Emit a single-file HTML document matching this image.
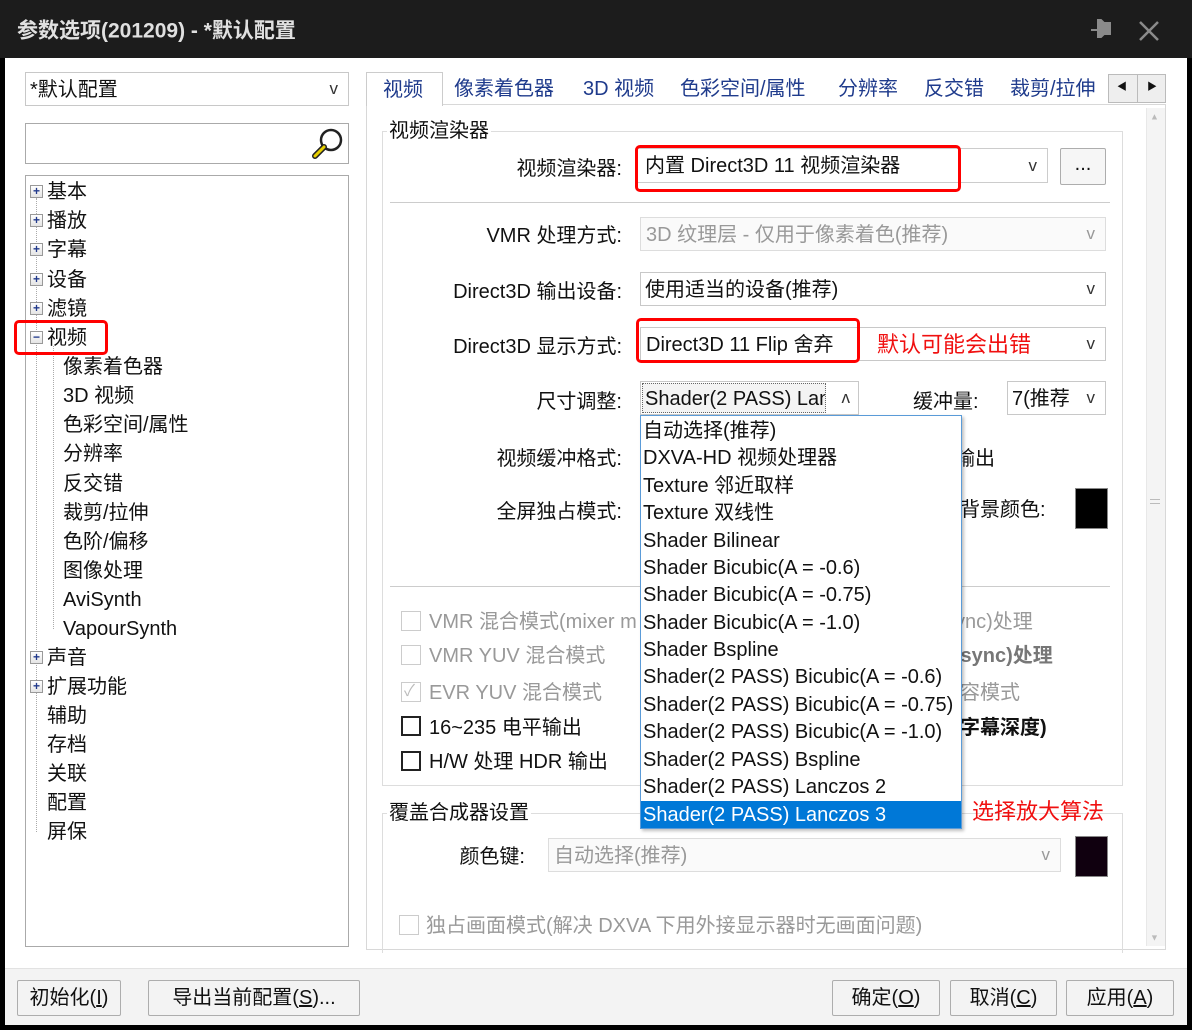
<!DOCTYPE html>
<html><head><meta charset="utf-8">
<style>
*{margin:0;padding:0;box-sizing:border-box}
body{width:1192px;height:1030px;background:#000;position:relative;overflow:hidden;font-family:"Liberation Sans","Noto Sans CJK SC",sans-serif;font-size:20px;color:#111}
.a{position:absolute}
.t{position:absolute;white-space:nowrap;line-height:1;transform:translateY(-50%)}
.r{text-align:right}
.cb{position:absolute;background:#fff;border:1px solid #c8c8c8}
.cb.g{background:#fafafa;border-color:#ddd}
.v{position:absolute;right:10px;top:50%;transform:translateY(-50%);font-size:17px;color:#333}
.btn{position:absolute;background:#f3f3f3;border:1px solid #adadad;border-radius:2px;text-align:center;line-height:34px}
.red{position:absolute;border:3px solid #f00;border-radius:5px}
.chk{position:absolute;width:20px;height:20px;border:1px solid #ccc;background:#fff}
.chk.b{border:2px solid #222}
.grey{color:#999}
.tab{color:#1f3b8c}
.pb{position:absolute;width:13px;height:13px;border:1px solid #999;background:linear-gradient(#fff,#e4e4e4);font-size:12px;line-height:10px;text-align:center;color:#223a8c;font-weight:bold}
.dl{position:absolute;border-left:1px dotted #aaa}
.dh{position:absolute;border-top:1px dotted #aaa;width:8px}
</style></head><body>
<!-- title bar -->
<div class="a" style="left:0;top:0;width:1192px;height:58px;background:#1c1c1c"></div>
<div class="t" style="left:17px;top:31px;font-size:21px;color:#e0e0e0;font-weight:bold">参数选项(201209) - *默认配置</div>
<svg class="a" style="left:1088px;top:19px" width="26" height="22"><path d="M3 11h7M10 5v13h3l3-3h6V4h-6l-3-3h-3z" fill="#8a8a8a" stroke="#8a8a8a" stroke-width="2"/></svg>
<svg class="a" style="left:1138px;top:20px" width="22" height="22"><path d="M2 2L20 20M20 2L2 20" stroke="#8a8a8a" stroke-width="2.5"/></svg>
<!-- window body -->
<div class="a" style="left:5px;top:58px;width:1182px;height:967px;background:#fff"></div>
<div class="a" style="left:5px;top:968px;width:1182px;height:57px;background:#f3f3f3;border-top:1px solid #e2e2e2"></div>

<!-- profile combo -->
<div class="cb" style="left:25px;top:72px;width:324px;height:34px"><div class="t" style="left:4px;top:17px">*默认配置</div><span class="v">v</span></div>
<!-- search -->
<div class="cb" style="left:25px;top:123px;width:324px;height:41px;border-color:#aaa"></div>
<svg class="a" style="left:309px;top:126px" width="36" height="36"><circle cx="22" cy="14" r="10" fill="#fff" stroke="#222" stroke-width="2.5"/><path d="M15 21L6 30" stroke="#222" stroke-width="6" stroke-linecap="round"/><path d="M15 21L6 30" stroke="#e8d000" stroke-width="3" stroke-linecap="round"/></svg>
<!-- tree -->
<div class="cb" style="left:25px;top:175px;width:324px;height:772px;border-color:#aaa"></div>
<div class="dl" style="left:36px;top:198px;height:634px"></div>
<div class="dl" style="left:53px;top:346px;height:283px"></div>
<div class="pb" style="left:30px;top:185px">+</div><div class="t" style="left:47px;top:192px">基本</div>
<div class="pb" style="left:30px;top:214px">+</div><div class="t" style="left:47px;top:221px">播放</div>
<div class="pb" style="left:30px;top:243px">+</div><div class="t" style="left:47px;top:250px">字幕</div>
<div class="pb" style="left:30px;top:273px">+</div><div class="t" style="left:47px;top:280px">设备</div>
<div class="pb" style="left:30px;top:302px">+</div><div class="t" style="left:47px;top:309px">滤镜</div>
<div class="pb" style="left:30px;top:331px">−</div><div class="t" style="left:47px;top:338px">视频</div>
<div class="t" style="left:63px;top:367px">像素着色器</div>
<div class="t" style="left:63px;top:396px">3D 视频</div>
<div class="t" style="left:63px;top:425px">色彩空间/属性</div>
<div class="t" style="left:63px;top:454px">分辨率</div>
<div class="t" style="left:63px;top:484px">反交错</div>
<div class="t" style="left:63px;top:513px">裁剪/拉伸</div>
<div class="t" style="left:63px;top:542px">色阶/偏移</div>
<div class="t" style="left:63px;top:571px">图像处理</div>
<div class="t" style="left:63px;top:600px">AviSynth</div>
<div class="t" style="left:63px;top:629px">VapourSynth</div>
<div class="pb" style="left:30px;top:651px">+</div><div class="t" style="left:47px;top:658px">声音</div>
<div class="pb" style="left:30px;top:680px">+</div><div class="t" style="left:47px;top:687px">扩展功能</div>
<div class="t" style="left:47px;top:716px">辅助</div>
<div class="t" style="left:47px;top:745px">存档</div>
<div class="t" style="left:47px;top:774px">关联</div>
<div class="t" style="left:47px;top:803px">配置</div>
<div class="t" style="left:47px;top:832px">屏保</div>
<div class="red" style="left:14px;top:320px;width:94px;height:35px"></div>

<!-- tabs -->
<div class="a" style="left:366px;top:104px;width:800px;height:846px;border:1px solid #d8d8d8;background:#fff"></div>
<div class="a" style="left:366px;top:72px;width:77px;height:34px;border:1px solid #ccc;border-bottom:none;background:#fff"></div>
<div class="t tab" style="left:383px;top:90px">视频</div>
<div class="t tab" style="left:454px;top:89px">像素着色器</div>
<div class="t tab" style="left:583px;top:89px">3D 视频</div>
<div class="t tab" style="left:680px;top:89px">色彩空间/属性</div>
<div class="t tab" style="left:838px;top:89px">分辨率</div>
<div class="t tab" style="left:924px;top:89px">反交错</div>
<div class="t tab" style="left:1010px;top:89px">裁剪/拉伸</div>
<div class="a" style="left:1108px;top:74px;width:58px;height:29px;border:1px solid #bbb;background:#eee"></div>
<div class="a" style="left:1137px;top:74px;width:1px;height:29px;background:#bbb"></div>
<div class="t" style="left:1117px;top:88px;font-size:10px">◀</div>
<div class="t" style="left:1147px;top:88px;font-size:10px">▶</div>
<!-- scrollbar -->
<div class="a" style="left:1146px;top:108px;width:19px;height:838px;background:#f4f4f4;border-left:1px solid #e8e8e8"></div>
<div class="t" style="left:1150px;top:117px;font-size:9px;color:#bbb">▲</div>
<div class="t" style="left:1150px;top:938px;font-size:9px;color:#bbb">▼</div>
<div class="a" style="left:1150px;top:499px;width:10px;height:5px;border-top:1px solid #bbb;border-bottom:1px solid #bbb"></div>

<!-- group 1 -->
<div class="a" style="left:382px;top:131px;width:741px;height:655px;border:1px solid #ddd"></div>
<div class="t" style="left:387px;top:131px;background:#fff;padding:0 2px">视频渲染器</div>
<div class="a" style="left:390px;top:202px;width:720px;height:1px;background:#ccc"></div>
<div class="a" style="left:390px;top:586px;width:720px;height:1px;background:#ccc"></div>

<div class="t r" style="right:570px;top:169px">视频渲染器:</div>
<div class="cb" style="left:636px;top:148px;width:412px;height:35px;border-color:#ccc"><div class="t" style="left:8px;top:17px">内置 Direct3D 11 视频渲染器</div><span class="v">v</span></div>
<div class="btn" style="left:1060px;top:148px;width:46px;height:37px;background:#f6f6f6;line-height:30px">...</div>
<div class="red" style="left:635px;top:145px;width:326px;height:47px"></div>

<div class="t r" style="right:570px;top:236px">VMR 处理方式:</div>
<div class="cb g" style="left:640px;top:217px;width:466px;height:34px"><div class="t grey" style="left:5px;top:17px">3D 纹理层 - 仅用于像素着色(推荐)</div><span class="v grey">v</span></div>

<div class="t r" style="right:570px;top:292px">Direct3D 输出设备:</div>
<div class="cb" style="left:640px;top:272px;width:466px;height:34px"><div class="t" style="left:4px;top:17px">使用适当的设备(推荐)</div><span class="v">v</span></div>

<div class="t r" style="right:570px;top:347px">Direct3D 显示方式:</div>
<div class="cb" style="left:640px;top:327px;width:466px;height:34px"><div class="t" style="left:5px;top:17px">Direct3D 11 Flip 舍弃</div><span class="v">v</span></div>
<div class="red" style="left:636px;top:318px;width:224px;height:45px"></div>
<div class="t" style="left:877px;top:345px;color:#f01010;font-size:22px">默认可能会出错</div>

<div class="t r" style="right:570px;top:402px">尺寸调整:</div>
<div class="cb" style="left:640px;top:381px;width:219px;height:34px;overflow:hidden"><div class="a" style="left:1px;top:1px;width:184px;height:30px;border:1px dotted #666;background:#f4f4f4"></div><div class="t" style="left:4px;top:17px;width:180px;overflow:hidden">Shader(2 PASS) Lanczos 3</div><span class="v" style="right:8px">ʌ</span></div>
<div class="t" style="left:913px;top:402px">缓冲量:</div>
<div class="cb" style="left:1007px;top:381px;width:99px;height:34px"><div class="t" style="left:4px;top:17px">7(推荐</div><span class="v">v</span></div>

<div class="t r" style="right:570px;top:459px">视频缓冲格式:</div>
<div class="t" style="left:955px;top:459px">输出</div>
<div class="t r" style="right:570px;top:512px">全屏独占模式:</div>
<div class="t" style="left:960px;top:510px">背景颜色:</div>
<div class="a" style="left:1075px;top:488px;width:33px;height:41px;background:#000;border:1px solid #888"></div>

<!-- checkboxes -->
<div class="chk" style="left:401px;top:611px"></div><div class="t grey" style="left:429px;top:622px">VMR 混合模式(mixer m</div>
<div class="t grey" style="left:955px;top:622px">ync)处理</div>
<div class="chk" style="left:401px;top:645px"></div><div class="t grey" style="left:429px;top:656px">VMR YUV 混合模式</div>
<div class="t" style="left:955px;top:656px;color:#777;font-weight:bold">/sync)处理</div>
<div class="chk" style="left:401px;top:682px"></div><div class="t" style="left:404px;top:692px;color:#bbb;font-size:16px">✓</div><div class="t grey" style="left:429px;top:693px">EVR YUV 混合模式</div>
<div class="t grey" style="left:960px;top:693px">容模式</div>
<div class="chk b" style="left:401px;top:716px"></div><div class="t" style="left:429px;top:728px">16~235 电平输出</div>
<div class="t" style="left:960px;top:728px;font-weight:bold">字幕深度)</div>
<div class="chk b" style="left:401px;top:751px"></div><div class="t" style="left:429px;top:762px">H/W 处理 HDR 输出</div>

<!-- group 2 -->
<div class="a" style="left:382px;top:813px;width:741px;height:140px;border:1px solid #ddd;border-bottom:none"></div>
<div class="t" style="left:387px;top:813px;background:#fff;padding:0 2px">覆盖合成器设置</div>
<div class="t r" style="right:667px;top:857px">颜色键:</div>
<div class="cb g" style="left:548px;top:838px;width:513px;height:34px"><div class="t grey" style="left:5px;top:17px">自动选择(推荐)</div><span class="v grey">v</span></div>
<div class="a" style="left:1075px;top:836px;width:33px;height:41px;background:#10000f;border:1px solid #888"></div>
<div class="chk" style="left:399px;top:915px"></div><div class="t grey" style="left:426px;top:926px">独占画面模式(解决 DXVA 下用外接显示器时无画面问题)</div>

<!-- dropdown list -->
<div class="a" style="left:640px;top:415px;width:322px;height:414px;background:#fff;border:1px solid #5a9bd8;box-shadow:2px 2px 3px rgba(0,0,0,.25)"></div>
<div class="a" style="left:641px;top:801px;width:320px;height:27px;background:#0078d7"></div>
<div class="t" style="left:643px;top:431px">自动选择(推荐)</div>
<div class="t" style="left:643px;top:458px">DXVA-HD 视频处理器</div>
<div class="t" style="left:643px;top:486px">Texture 邻近取样</div>
<div class="t" style="left:643px;top:513px">Texture 双线性</div>
<div class="t" style="left:643px;top:541px">Shader Bilinear</div>
<div class="t" style="left:643px;top:568px">Shader Bicubic(A = -0.6)</div>
<div class="t" style="left:643px;top:595px">Shader Bicubic(A = -0.75)</div>
<div class="t" style="left:643px;top:623px">Shader Bicubic(A = -1.0)</div>
<div class="t" style="left:643px;top:650px">Shader Bspline</div>
<div class="t" style="left:643px;top:677px">Shader(2 PASS) Bicubic(A = -0.6)</div>
<div class="t" style="left:643px;top:705px">Shader(2 PASS) Bicubic(A = -0.75)</div>
<div class="t" style="left:643px;top:732px">Shader(2 PASS) Bicubic(A = -1.0)</div>
<div class="t" style="left:643px;top:760px">Shader(2 PASS) Bspline</div>
<div class="t" style="left:643px;top:787px">Shader(2 PASS) Lanczos 2</div>
<div class="t" style="left:643px;top:815px;color:#fff">Shader(2 PASS) Lanczos 3</div>
<div class="t" style="left:972px;top:812px;color:#f01010;font-size:22px">选择放大算法</div>

<!-- bottom buttons -->
<div class="btn" style="left:17px;top:980px;width:104px;height:36px">初始化(<u>I</u>)</div>
<div class="btn" style="left:148px;top:980px;width:212px;height:36px">导出当前配置(<u>S</u>)...</div>
<div class="btn" style="left:832px;top:980px;width:108px;height:36px">确定(<u>O</u>)</div>
<div class="btn" style="left:950px;top:980px;width:107px;height:36px">取消(<u>C</u>)</div>
<div class="btn" style="left:1066px;top:980px;width:108px;height:36px">应用(<u>A</u>)</div>
</body></html>
